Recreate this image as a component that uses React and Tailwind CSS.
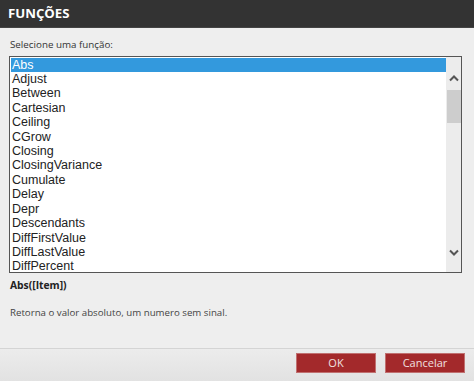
import { useState } from 'react';

const funcs = [
  'Abs', 'Adjust', 'Between', 'Cartesian', 'Ceiling', 'CGrow', 'Closing',
  'ClosingVariance', 'Cumulate', 'Delay', 'Depr', 'Descendants',
  'DiffFirstValue', 'DiffLastValue', 'DiffPercent',
];

const App = () => {
  const [selected, setSelected] = useState('Abs');

  return (
    <div className="w-[474px] h-[381px] bg-[#eeeeee] flex flex-col font-['Open_Sans',sans-serif] overflow-hidden">
      <div className="h-[28px] bg-[#333333] flex items-center px-[8px] border-b border-[#444]">
        <h2 className="text-white font-bold text-[13.2px]">FUNÇÕES</h2>
      </div>

      <div className="flex-1 flex flex-col px-[9px] pt-[9px]">
        <p className="text-[9.8px] text-[#333] leading-[16px] pl-[1px]">Selecione uma função:</p>
        <div className="mt-[3px] h-[217px] w-[453px] border border-[#555] bg-white flex">
          <ul className="flex-1 pt-[0.5px] pl-[1px] font-['Liberation_Sans',Arial,sans-serif] text-[12.5px] text-[#222]">
            {funcs.map((f) => (
              <li
                key={f}
                onClick={() => setSelected(f)}
                className={
                  f === selected
                    ? 'h-[14.43px] leading-[14.43px] px-[1px] bg-[#3399dd] text-white'
                    : 'h-[14.43px] leading-[14.43px] px-[1px]'
                }
              >
                {f}
              </li>
            ))}
          </ul>
          <div className="w-[15px] bg-[#ececec] flex flex-col items-center">
            <svg className="mt-[18px]" width="10" height="7" viewBox="0 0 10 7">
              <path d="M1 5.5 L5 1.5 L9 5.5" stroke="#555" strokeWidth="2" fill="none" />
            </svg>
            <div className="mt-[8px] w-[14px] h-[33px] bg-[#cdcdcd]" />
            <div className="flex-1" />
            <svg className="mb-[16px]" width="10" height="7" viewBox="0 0 10 7">
              <path d="M1 1.5 L5 5.5 L9 1.5" stroke="#555" strokeWidth="2" fill="none" />
            </svg>
          </div>
        </div>

        <p className="mt-[5px] text-[10.3px] font-bold text-[#222] pl-[1px] leading-[14px]">Abs([Item])</p>
        <p className="mt-[14px] text-[9.7px] text-[#444] pl-[1px] leading-[14px]">
          Retorna o valor absoluto, um numero sem sinal.
        </p>
      </div>

      <div className="h-[33px] border-t border-[#d4d4d4] bg-gradient-to-b from-[#ececec] to-[#e2e2e2] flex items-start justify-end gap-[9px] pr-[9px] pt-[4px]">
        <button className="w-[80px] h-[20px] bg-[#a3292b] border border-[#c07070] text-[#f0e0e0] text-[11px] leading-[18px]">
          OK
        </button>
        <button className="w-[80px] h-[20px] bg-[#a3292b] border border-[#c07070] text-[#f0e0e0] text-[11px] leading-[18px]">
          Cancelar
        </button>
      </div>
    </div>
  );
};

export default App;
